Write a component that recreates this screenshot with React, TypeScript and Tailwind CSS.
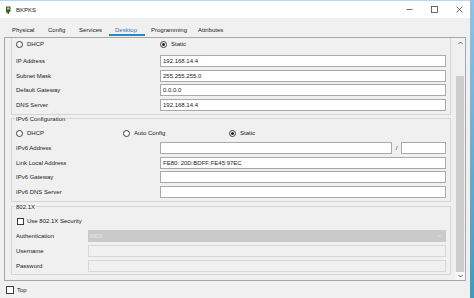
import React from "react";

const tabs = [
  { name: "Physical", w: "w-[36px]" },
  { name: "Config", w: "w-[31px]" },
  { name: "Services", w: "w-[36px]" },
  { name: "Desktop", w: "w-[36px]", active: true },
  { name: "Programming", w: "w-[47px]" },
  { name: "Attributes", w: "w-[40px]" },
];

function Radio({ checked = false }: { checked?: boolean }) {
  return (
    <span className="flex h-[7px] w-[7px] shrink-0 items-center justify-center rounded-full border border-[#3c3c3c] bg-white">
      {checked && <span className="h-[3px] w-[3px] rounded-full bg-[#1e1e1e]" />}
    </span>
  );
}

function Box({ value = "", w = "w-[286px]", disabled = false }: { value?: string; w?: string; disabled?: boolean }) {
  return (
    <div
      className={
        disabled
          ? `${w} h-[12px] border border-[#d8d8d8] bg-[#f0f0f0] px-[2px] leading-[10px]`
          : `${w} h-[12px] border border-[#a9a9a9] bg-white px-[2px] leading-[10px]`
      }
    >
      {value}
    </div>
  );
}

function Row({ label, children, labelW = "w-[144px]" }: { label: string; children: React.ReactNode; labelW?: string }) {
  return (
    <div className="flex items-center">
      <div className={`${labelW} shrink-0`}>{label}</div>
      {children}
    </div>
  );
}

function Logo() {
  return (
    <svg width="7" height="8" viewBox="0 0 7 8">
      <path d="M1 0.5h4.5v4.5l-1.5 1.5v1.5h-1.5v-1.5h-1.5z" fill="#3b5a2a" />
      <rect x="2" y="1.5" width="2.5" height="2" fill="#c9d68a" />
    </svg>
  );
}

export default function App() {
  return (
    <div className="flex h-[298px] w-[474px] overflow-hidden bg-[#f0f0f0] font-['Liberation_Sans',Arial,sans-serif] text-[6px] leading-[8px] text-[#1a1a1a]">
      <div className="flex w-[470px] flex-col">
        {/* title bar */}
        <div className="flex h-[18px] shrink-0 items-center border-t border-[#bcd6ee] bg-white">
          <div className="ml-[5px]">
            <Logo />
          </div>
          <span className="ml-[4px] text-[#222]">BKPKS</span>
          <div className="ml-auto flex items-center gap-[18px] pr-[7px]">
            <svg width="7" height="7" viewBox="0 0 7 7">
              <line x1="0.5" y1="3.5" x2="6.5" y2="3.5" stroke="#444" strokeWidth="0.8" />
            </svg>
            <svg width="7" height="7" viewBox="0 0 7 7">
              <rect x="0.5" y="0.5" width="6" height="6" fill="none" stroke="#444" strokeWidth="0.8" />
            </svg>
            <svg width="7" height="7" viewBox="0 0 7 7">
              <path d="M0.5 0.5l6 6M6.5 0.5l-6 6" stroke="#444" strokeWidth="0.8" />
            </svg>
          </div>
        </div>

        {/* tabs */}
        <div className="flex h-[19px] shrink-0 items-end pl-[6px]">
          {tabs.map((t) => (
            <div
              key={t.name}
              className={
                t.active
                  ? `${t.w} mb-[1px] h-[10px] border-b-2 border-[#2e86c1] px-[6px] text-[#3a78b0]`
                  : `${t.w} mb-[1px] h-[10px] border-b-2 border-transparent px-[6px]`
              }
            >
              {t.name}
            </div>
          ))}
        </div>

        {/* panel */}
        <div className="mx-[4px] flex h-[244px] shrink-0 border border-[#a8a8a8]">
          <div className="h-full w-[450px] overflow-hidden">
            {/* IPv4 */}
            <fieldset className="ml-[6px] w-[440px] border border-t-0 border-[#d6d6d6] px-[4px] pt-[2px] pb-[3px]">
              <div className="flex h-[8px] items-center">
                <div className="flex w-[144px] items-center gap-[4px]">
                  <Radio /> DHCP
                </div>
                <div className="flex items-center gap-[4px]">
                  <Radio checked /> Static
                </div>
              </div>
              <div className="mt-[7px] flex flex-col gap-[2.5px]">
                <Row label="IP Address">
                  <Box value="192.168.14.4" />
                </Row>
                <Row label="Subnet Mask">
                  <Box value="255.255.255.0" />
                </Row>
                <Row label="Default Gateway">
                  <Box value="0.0.0.0" />
                </Row>
                <Row label="DNS Server">
                  <Box value="192.168.14.4" />
                </Row>
              </div>
            </fieldset>

            {/* IPv6 */}
            <fieldset className="ml-[6px] w-[440px] border border-[#d6d6d6] px-[4px] pb-[3px]">
              <legend className="-ml-[1px] px-[1px] leading-[8px]">IPv6 Configuration</legend>
              <div className="mt-[6.5px] flex h-[8px] items-center">
                <div className="flex w-[107px] items-center gap-[4px]">
                  <Radio /> DHCP
                </div>
                <div className="flex w-[106px] items-center gap-[4px]">
                  <Radio /> Auto Config
                </div>
                <div className="flex items-center gap-[4px]">
                  <Radio checked /> Static
                </div>
              </div>
              <div className="mt-[5px] flex flex-col gap-[2.5px]">
                <Row label="IPv6 Address">
                  <Box w="w-[232px]" />
                  <div className="w-[9px] text-center">/</div>
                  <Box w="w-[45px]" />
                </Row>
                <Row label="Link Local Address">
                  <Box value="FE80::20D:BDFF:FE45:97EC" />
                </Row>
                <Row label="IPv6 Gateway">
                  <Box />
                </Row>
                <Row label="IPv6 DNS Server">
                  <Box />
                </Row>
              </div>
            </fieldset>

            {/* 802.1X */}
            <fieldset className="mt-[1px] ml-[6px] w-[440px] border border-[#d6d6d6] px-[4px] pb-[2px]">
              <legend className="-ml-[1px] px-[1px] leading-[8px]">802.1X</legend>
              <div className="mt-[6.5px] flex h-[8px] items-center gap-[3px] pl-[1px]">
                <span className="h-[7px] w-[7px] border border-[#3c3c3c] bg-white" />
                Use 802.1X Security
              </div>
              <div className="mt-[5px] flex flex-col gap-[3px]">
                <Row label="Authentication" labelW="w-[72px]">
                  <div className="flex h-[12px] w-[358px] items-center justify-between bg-[#cacaca] px-[2px] text-[#e6e6e6]">
                    <span>MD5</span>
                    <svg width="5" height="4" viewBox="0 0 5 4" className="mr-[2px]">
                      <path d="M0.5 1l2 2 2-2" fill="none" stroke="#e2e2e2" strokeWidth="0.8" />
                    </svg>
                  </div>
                </Row>
                <Row label="Username" labelW="w-[72px]">
                  <Box w="w-[358px]" disabled />
                </Row>
                <Row label="Password" labelW="w-[72px]">
                  <Box w="w-[358px]" disabled />
                </Row>
              </div>
            </fieldset>
          </div>

          {/* scrollbar */}
          <div className="flex h-full w-[10px] flex-col items-center">
            <div className="flex h-[10px] w-full items-center justify-center">
              <svg width="5" height="4" viewBox="0 0 5 4">
                <path d="M0.5 3l2-2 2 2" fill="none" stroke="#606060" strokeWidth="0.9" />
              </svg>
            </div>
            <div className="mt-[28px] w-[8px] flex-1 bg-[#cdcdcd]" />
            <div className="flex h-[8px] w-full items-center justify-center bg-[#f7f7f7]">
              <svg width="5" height="4" viewBox="0 0 5 4">
                <path d="M0.5 1l2 2 2-2" fill="none" stroke="#606060" strokeWidth="0.9" />
              </svg>
            </div>
          </div>
        </div>

        {/* bottom */}
        <div className="flex flex-1 items-center gap-[3px] pl-[6px]">
          <span className="h-[8px] w-[8px] border border-[#3c3c3c] bg-white" />
          Top
        </div>
      </div>
      <div className="w-[4px] bg-linear-to-b from-[#8fc3ea] to-[#3e9bbd]" />
    </div>
  );
}
